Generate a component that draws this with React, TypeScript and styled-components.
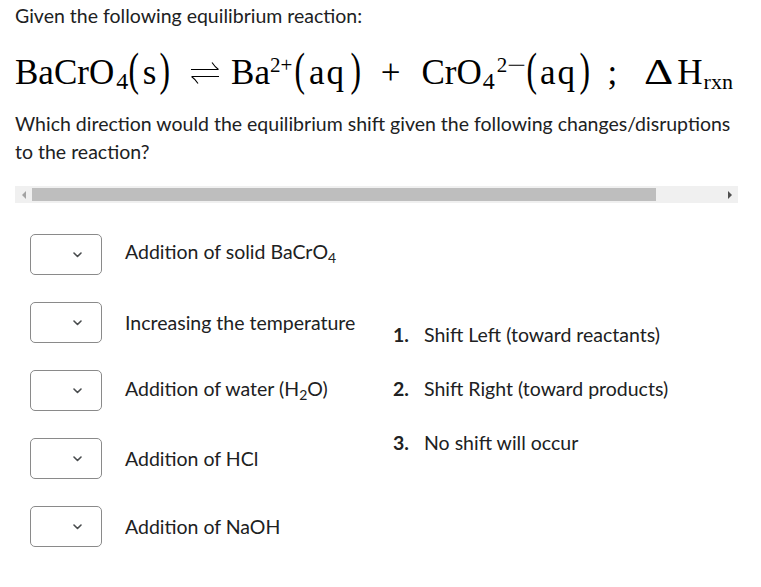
import React from "react";
import styled, {createGlobalStyle} from "styled-components";

const GlobalStyle = createGlobalStyle`
    body {
        margin: 0;
        background: #ffffff;
        color: #202122;
        font-family: Lato, "Liberation Sans", sans-serif;
    }
`;

const Page = styled.div`
    width: 761px;
    padding: 2px 0 0 15px;
    box-sizing: border-box;
`;

const Prompt = styled.p`
    margin: 0;
    font-size: 19.5px;
    line-height: 28px;
    width: 725px;
`;

const Equation = styled.div`
    display: flex;
    align-items: baseline;
    height: 57px;
    padding-top: 23px;
    font-family: "Liberation Serif", serif;
    font-size: 35px;
    color: #000;
    white-space: nowrap;
`;

// one piece of the formula; $ml is the space before it
const Part = styled.span<{ $ml?: number; $ls?: number }>`
    margin-left: ${(p) => p.$ml ?? 0}px;
    letter-spacing: ${(p) => p.$ls ?? 0}px;
`;

const Sub = styled(Part)<{ $size?: number }>`
    font-size: ${(p) => p.$size ?? 24}px;
    position: relative;
    top: 5px;
`;

const Sup = styled(Part)`
    font-size: 21px;
    position: relative;
    top: -12px;
`;

const Minus = styled.span`
    display: inline-block;
    transform: scaleX(1.6);
    transform-origin: left center;
    width: 19px;
`;

const Paren = styled(Part)`
    display: inline-block;
    transform: scale(0.9, 1.3);
    transform-origin: 50% 70%;
`;

const Delta = styled(Part)`
    display: inline-block;
    width: 29px;
    transform: scaleX(1.3);
    transform-origin: left center;
`;

const Harpoons = ({ml}: { ml: number }) => (
    <svg width="28" height="22" viewBox="0 0 28 22" style={{marginLeft: ml}}>
        <path d="M0 7.5 H27.5 M27.5 7.5 Q24 5 21 0.5" fill="none" stroke="#000" strokeWidth="1.1"/>
        <path d="M28 14.5 H0.5 M0.5 14.5 Q4 17 7 21.5" fill="none" stroke="#000" strokeWidth="1.1"/>
    </svg>
);

const Scrollbar = styled.div`
    margin-top: 20px;
    width: 723px;
    height: 17px;
    background: #f0f0f0;
    display: flex;
    align-items: center;
`;

const ScrollArrow = styled.span<{ $dir: "left" | "right"; $color: string }>`
    width: 17px;
    height: 17px;
    display: flex;
    align-items: center;
    justify-content: center;
    &::before {
        content: "";
        border-top: 4px solid transparent;
        border-bottom: 4px solid transparent;
        ${(p) => p.$dir === "left"
            ? `border-right: 4px solid ${p.$color};`
            : `border-left: 4px solid ${p.$color};`}
    }
`;

const ScrollTrack = styled.div`
    flex: 1;
    height: 13px;
    display: flex;
`;

const ScrollThumb = styled.div`
    width: 624px;
    height: 13px;
    background: #bebebe;
`;

const Matching = styled.div`
    display: grid;
    grid-template-columns: 378px 1fr;
    margin-top: 31px;
`;

const Questions = styled.div`
    display: flex;
    flex-direction: column;
    gap: 27px;
    padding-left: 15px;
`;

const QuestionRow = styled.div`
    display: flex;
    align-items: center;
    gap: 23px;
    height: 41px;
`;

const SelectBox = styled.div`
    width: 51px;
    height: 39px;
    border: 1px solid #8a8a8a;
    border-radius: 5px;
    display: flex;
    align-items: center;
    justify-content: flex-end;
    padding-right: 19px;
    flex-shrink: 0;
`;

const Label = styled.span<{ $lift?: number }>`
    font-size: 19.5px;
    position: relative;
    top: ${(p) => -(p.$lift ?? 0)}px;
`;

const LabelSub = styled.sub`
    font-size: 14px;
    vertical-align: -4px;
    line-height: 0;
`;

const Chevron = () => (
    <svg width="9" height="6" viewBox="0 0 9 6">
        <path d="M1 1 L4.5 4.5 L8 1" fill="none" stroke="#494c4e" strokeWidth="1.6" strokeLinecap="round" strokeLinejoin="round"/>
    </svg>
);

const Answers = styled.ol`
    list-style: none;
    margin: 0;
    padding: 87px 0 0 0;
    display: flex;
    flex-direction: column;
    gap: 26px;
`;

const Answer = styled.li`
    display: flex;
    font-size: 19.5px;
    line-height: 28px;
`;

const AnswerNum = styled.span`
    width: 31px;
    font-weight: 700;
`;

const questions: { text: React.ReactNode; lift?: number }[] = [
    {text: <>Addition of solid BaCrO<LabelSub>4</LabelSub></>, lift: 3},
    {text: "Increasing the temperature"},
    {text: <>Addition of water (H<LabelSub>2</LabelSub>O)</>, lift: 2},
    {text: "Addition of HCl"},
    {text: "Addition of NaOH"},
];

const answers = [
    "Shift Left (toward reactants)",
    "Shift Right (toward products)",
    "No shift will occur",
];

const App: React.FC = () => {
    return (
        <>
            <GlobalStyle/>
            <Page>
                <Prompt>Given the following equilibrium reaction:</Prompt>
                <Equation>
                    <Part>BaCrO</Part>
                    <Sub $ml={2}>4</Sub>
                    <Paren>(</Paren>
                    <Part $ml={3}>s</Part>
                    <Paren $ml={3}>)</Paren>
                    <Harpoons ml={20}/>
                    <Part $ml={12}>Ba</Part>
                    <Sup>2+</Sup>
                    <Paren $ml={2}>(</Paren>
                    <Part $ml={3} $ls={2}>aq</Part>
                    <Paren $ml={4}>)</Paren>
                    <Part $ml={19}>+</Part>
                    <Part $ml={21}>CrO</Part>
                    <Sub $ml={1}>4</Sub>
                    <Sup $ml={2}>2<Minus>−</Minus></Sup>
                    <Paren $ml={0}>(</Paren>
                    <Part $ml={2} $ls={2}>aq</Part>
                    <Paren $ml={2}>)</Paren>
                    <Part $ml={17}>;</Part>
                    <Delta $ml={27}>Δ</Delta>
                    <Part $ml={4}>H</Part>
                    <Sub $ml={1} $size={22}>rxn</Sub>
                </Equation>
                <Prompt>
                    Which direction would the equilibrium shift given the following changes/disruptions
                    to the reaction?
                </Prompt>
                <Scrollbar>
                    <ScrollArrow $dir="left" $color="#a3a3a3"/>
                    <ScrollTrack><ScrollThumb/></ScrollTrack>
                    <ScrollArrow $dir="right" $color="#505050"/>
                </Scrollbar>
                <Matching>
                    <Questions>
                        {questions.map((q, i) => (
                            <QuestionRow key={i}>
                                <SelectBox><Chevron/></SelectBox>
                                <Label $lift={q.lift}>{q.text}</Label>
                            </QuestionRow>
                        ))}
                    </Questions>
                    <Answers>
                        {answers.map((a, i) => (
                            <Answer key={i}>
                                <AnswerNum>{i + 1}.</AnswerNum>
                                <span>{a}</span>
                            </Answer>
                        ))}
                    </Answers>
                </Matching>
            </Page>
        </>
    );
};

export default App;
